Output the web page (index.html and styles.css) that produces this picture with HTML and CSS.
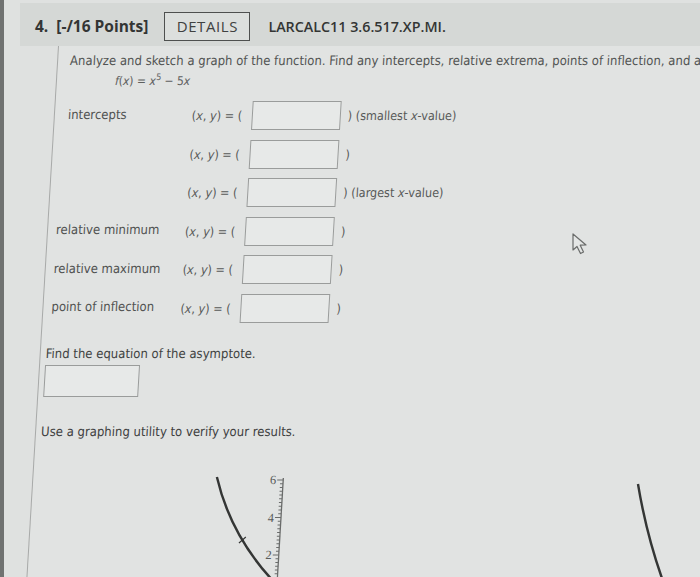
FILE: index.html
```html
<!DOCTYPE html>
<html>
<head>
<meta charset="utf-8">
<link rel="stylesheet" href="styles.css">
</head>
<body>
<div class="page">
  <header class="qhead">
    <span class="qno">4.</span>
    <span class="pts">[-/16 Points]</span>
    <span class="details">DETAILS</span>
    <span class="qid">LARCALC11 3.6.517.XP.MI.</span>
  </header>
  <main class="qbody">
    <p class="prompt">Analyze and sketch a graph of the function. Find any intercepts, relative extrema, points of inflection, and asymptotes. (If an answer does not exist, enter DNE.)</p>
    <p class="func"><i>f</i>(<i>x</i>) = <i>x</i><sup>5</sup> − 5<i>x</i></p>
    <div class="answers">
      <div class="row"><span class="label first">intercepts</span><span class="eq">(<i>x</i>, <i>y</i>) = (</span><span class="box"></span><span class="close">) (smallest <i>x</i>-value)</span></div>
      <div class="row"><span class="label"></span><span class="eq">(<i>x</i>, <i>y</i>) = (</span><span class="box"></span><span class="close">)</span></div>
      <div class="row"><span class="label"></span><span class="eq">(<i>x</i>, <i>y</i>) = (</span><span class="box"></span><span class="close">) (largest <i>x</i>-value)</span></div>
      <div class="row"><span class="label">relative minimum</span><span class="eq">(<i>x</i>, <i>y</i>) = (</span><span class="box"></span><span class="close">)</span></div>
      <div class="row"><span class="label">relative maximum</span><span class="eq">(<i>x</i>, <i>y</i>) = (</span><span class="box"></span><span class="close">)</span></div>
      <div class="row"><span class="label">point of inflection</span><span class="eq">(<i>x</i>, <i>y</i>) = (</span><span class="box"></span><span class="close">)</span></div>
    </div>
    <p class="q2">Find the equation of the asymptote.</p>
    <div class="box wide"></div>
    <p class="q3">Use a graphing utility to verify your results.</p>
    <svg class="graph" width="680" height="140" viewBox="0 0 680 140">
      <g class="axis">
        <line x1="245" y1="36" x2="245" y2="140"/>
        <line x1="239" y1="38" x2="245" y2="38"/>
        <line x1="242" y1="41.75" x2="245" y2="41.75"/>
        <line x1="242" y1="45.5" x2="245" y2="45.5"/>
        <line x1="242" y1="49.25" x2="245" y2="49.25"/>
        <line x1="242" y1="53" x2="245" y2="53"/>
        <line x1="242" y1="56.75" x2="245" y2="56.75"/>
        <line x1="242" y1="60.5" x2="245" y2="60.5"/>
        <line x1="242" y1="64.25" x2="245" y2="64.25"/>
        <line x1="242" y1="68" x2="245" y2="68"/>
        <line x1="242" y1="71.75" x2="245" y2="71.75"/>
        <line x1="239" y1="75.5" x2="245" y2="75.5"/>
        <line x1="242" y1="79.25" x2="245" y2="79.25"/>
        <line x1="242" y1="83" x2="245" y2="83"/>
        <line x1="242" y1="86.75" x2="245" y2="86.75"/>
        <line x1="242" y1="90.5" x2="245" y2="90.5"/>
        <line x1="242" y1="94.25" x2="245" y2="94.25"/>
        <line x1="242" y1="98" x2="245" y2="98"/>
        <line x1="242" y1="101.75" x2="245" y2="101.75"/>
        <line x1="242" y1="105.5" x2="245" y2="105.5"/>
        <line x1="242" y1="109.25" x2="245" y2="109.25"/>
        <line x1="239" y1="113" x2="245" y2="113"/>
        <line x1="242" y1="116.75" x2="245" y2="116.75"/>
        <line x1="242" y1="120.5" x2="245" y2="120.5"/>
        <line x1="242" y1="124.25" x2="245" y2="124.25"/>
        <line x1="242" y1="128" x2="245" y2="128"/>
        <line x1="242" y1="131.75" x2="245" y2="131.75"/>
        <line x1="242" y1="135.5" x2="245" y2="135.5"/>
        <line x1="242" y1="139.25" x2="245" y2="139.25"/>
      </g>
      <g class="ticklabels">
        <text x="238" y="42.5">6</text>
        <text x="238" y="80">4</text>
        <text x="238" y="117.5">2</text>
      </g>
      <g class="curves">
        <path d="M178.5,35 Q196,95 244,142"/>
        <path d="M600,42 Q612,95 632,142"/>
        <line x1="204.5" y1="101" x2="211" y2="95"/>
      </g>
    </svg>
  </main>
  <svg class="cursor" width="22" height="26" viewBox="0 0 22 26">
    <path d="M3,3 L3,19 L7,15.5 L10.5,22.5 L13.5,21 L10.2,14.2 L16,14 Z"/>
  </svg>
</div>
</body>
</html>
```

FILE: styles.css
```css
html, body {
  margin: 0;
  padding: 0;
}

body {
  background: #dcdedd;
}

.page {
  position: relative;
  width: 700px;
  height: 577px;
  overflow: hidden;
  box-sizing: border-box;
  padding-top: 3px;
  border-left: 4px solid #707271;
  background: #dfe1e0;
  font-family: "DejaVu Sans Condensed", "DejaVu Sans", sans-serif;
  color: #4d4f4e;
}

/* ---------- header band ---------- */
.qhead {
  margin-left: 16px;
  height: 43px;
  box-sizing: border-box;
  padding: 3px 0 0 15px;
  background: #d5d8d6;
  display: flex;
  align-items: center;
  white-space: nowrap;
  font-family: "Open Sans", "Liberation Sans", sans-serif;
  color: #333534;
}

.qno,
.pts {
  font-weight: 700;
  font-size: 15.5px;
}

.pts {
  margin-left: 8px;
}

.details {
  margin-left: 16px;
  width: 86px;
  height: 29px;
  box-sizing: border-box;
  border: 1.5px solid #4e504f;
  background: #dcdfdd;
  display: flex;
  align-items: center;
  justify-content: center;
  font-size: 15px;
  letter-spacing: 0.6px;
  color: #3f4140;
}

.qid {
  margin-left: 18px;
  font-weight: 600;
  font-size: 14.3px;
}

/* ---------- question body (photo perspective -> slight skew) ---------- */
.qbody {
  display: block;
  margin-left: 54px;
  width: 720px;
  height: 540px;
  box-sizing: border-box;
  padding-left: 5px;
  border-left: 1px solid #a7a9a8;
  background: #e1e3e2;
  transform: skewX(-3.4deg);
  transform-origin: 0 0;
  font-size: 13px;
  white-space: nowrap;
}

.qbody p {
  margin: 0;
  line-height: 20px;
}

.prompt {
  padding-top: 5px;
  margin-left: 7px !important;
  color: #525453;
}

.func {
  margin-left: 53px !important;
  font-size: 12px;
  color: #5e605f;
}

.func sup {
  font-size: 9px;
  vertical-align: 5px;
  line-height: 0;
}

.answers {
  margin-top: 10px;
  display: flex;
  flex-direction: column;
  gap: 9.6px;
}

.row {
  display: flex;
  align-items: center;
  height: 29px;
}

.label {
  width: 129px;
  padding-left: 3px;
  margin-top: -3px;
  color: #505251;
}

.label.first {
  width: 124px;
  padding-left: 8px;
}

.eq {
  width: 60px;
  font-size: 12.5px;
  color: #575958;
}

.box {
  display: block;
  width: 89px;
  height: 29px;
  box-sizing: border-box;
  border: 1px solid #9a9c9b;
  background: #e7e9e8;
}

.close {
  margin-left: 7px;
  font-size: 12.5px;
  color: #575958;
}

.q2 {
  margin-top: 21px !important;
  color: #404241;
}

.box.wide {
  margin-top: 1px;
  width: 95px;
  height: 32px;
}

.q3 {
  margin-top: 25px !important;
  color: #3e403f;
}

.graph {
  display: block;
}

.axis line {
  stroke: #6a6c6b;
  stroke-width: 1;
}

.axis line:first-child {
  stroke-width: 1.3;
}

.ticklabels text {
  font-family: "Liberation Serif", "DejaVu Serif", serif;
  font-size: 12.5px;
  fill: #5a5c5b;
  text-anchor: end;
}

.curves path,
.curves line {
  fill: none;
  stroke: #343635;
  stroke-width: 2.4;
}

.curves line {
  stroke-width: 1.2;
}

/* ---------- mouse pointer over the page ---------- */
.cursor {
  position: absolute;
  left: 566px;
  top: 231px;
}

.cursor path {
  fill: #e4e6e5;
  stroke: #6a6c6b;
  stroke-width: 1.2;
  stroke-linejoin: round;
}
```
